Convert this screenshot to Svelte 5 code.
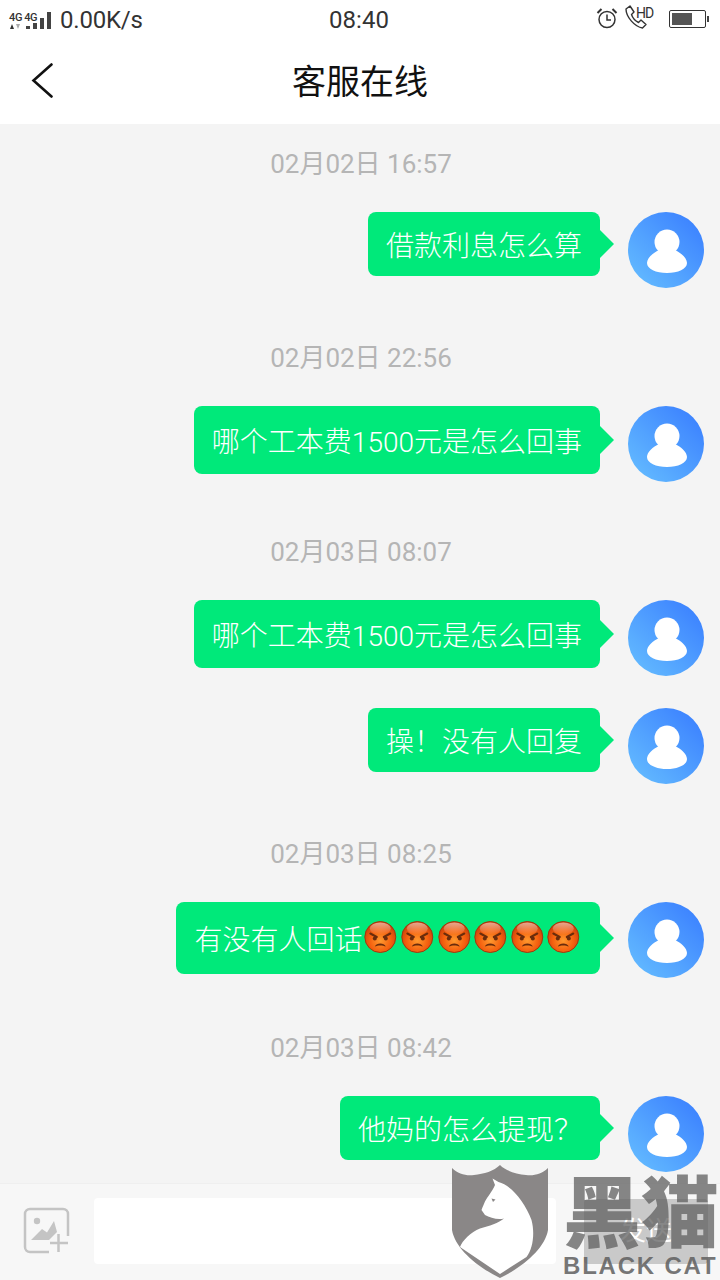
<script>
  const groups = [
    { time: "02月02日 16:57", msgs: [{ text: "借款利息怎么算" }] },
    { time: "02月02日 22:56", msgs: [{ text: "哪个工本费1500元是怎么回事", tall: true }] },
    {
      time: "02月03日 08:07",
      msgs: [{ text: "哪个工本费1500元是怎么回事", tall: true }, { text: "操！没有人回复" }],
    },
    { time: "02月03日 08:25", msgs: [{ text: "有没有人回话", angry: 6 }] },
    { time: "02月03日 08:42", msgs: [{ text: "他妈的怎么提现？" }] },
  ];
</script>

<div class="page">
  <div class="status">
    <div class="status-left">
      <div class="net">
        <div class="net-top"><span>4G</span><span>4G</span></div>
        <div class="net-arrows"><i class="up"></i><i class="down"></i></div>
      </div>
      <div class="signal"><i class="s1"></i><i class="s2"></i><i class="s3"></i><i class="s4"></i></div>
      <span class="speed">0.00K/s</span>
    </div>
    <div class="clock">08:40</div>
    <div class="status-right">
      <svg class="alarm" width="22" height="22" viewBox="0 0 22 22" fill="none" stroke="#333" stroke-width="1.5">
        <circle cx="11" cy="12.5" r="8" />
        <path d="M11 7.5v5.5h4" />
        <path d="M1.5 6 5.5 2M20.5 6l-4-4" stroke-width="2" />
      </svg>
      <div class="call">
        <svg width="24" height="26" viewBox="0 0 24 26" fill="none" stroke="#333" stroke-width="1.4" stroke-linejoin="round">
          <path d="M2 5 6 2l4 6-2.5 2.500c1 3 4 6.500 7 8l2.500-2.500 5 4.500-3.500 3.500C11 23 2 13 2 5Z" />
        </svg>
        <span>HD</span>
      </div>
      <div class="battery"><div class="battery-fill"></div></div>
      <div class="battery-tip"></div>
    </div>
  </div>

  <header class="nav">
    <svg class="back" width="24" height="36" viewBox="0 0 24 36" fill="none" stroke="#111" stroke-width="2.600" stroke-linecap="round">
      <path d="M20.500 1.500 2.500 17.500l18 16" />
    </svg>
    <h1>客服在线</h1>
  </header>

  <main class="chat">
    {#each groups as group}
      <section class="group">
        <div class="time">{group.time}</div>
        <div class="msgs">
          {#each group.msgs as msg}
            <div class="msg">
              <div class="bubble" class:tall={msg.tall} class:angry={msg.angry}>
                <span>{msg.text}</span>
                {#each Array(msg.angry || 0) as _}
                  <svg class="emoji" width="36.600" height="36" viewBox="0 0 36 36">
                    <defs>
                      <radialGradient id="face" cx="50%" cy="62%" r="58%">
                        <stop offset="0" stop-color="#ff9a2e" />
                        <stop offset="0.6" stop-color="#f4600f" />
                        <stop offset="1" stop-color="#c9400a" />
                      </radialGradient>
                      <linearGradient id="shine" x1="0" y1="0" x2="0" y2="1">
                        <stop offset="0" stop-color="#fff" stop-opacity="0.55" />
                        <stop offset="1" stop-color="#fff" stop-opacity="0" />
                      </linearGradient>
                    </defs>
                    <circle cx="18" cy="17" r="15.500" fill="url(#face)" stroke="#9c3a10" stroke-width="1" />
                    <ellipse cx="18" cy="8.500" rx="10.500" ry="6" fill="url(#shine)" />
                    <path d="M8 13.500 14.500 17M28 13.500 21.500 17" stroke="#6b2c0c" stroke-width="2" stroke-linecap="round" />
                    <circle cx="12.500" cy="18.500" r="2" fill="#6b2c0c" />
                    <circle cx="23.500" cy="18.500" r="2" fill="#6b2c0c" />
                    <path d="M12.500 26.500c1.500-4 9.500-4 11 0-3-1.500-8-1.500-11 0Z" fill="#6b2c0c" />
                  </svg>
                {/each}
              </div>
              <svg class="avatar" width="76" height="76" viewBox="0 0 76 76">
                <defs>
                  <linearGradient id="avatar-bg" x1="0" y1="1" x2="1" y2="0">
                    <stop offset="0.1" stop-color="#62b9ff" />
                    <stop offset="0.9" stop-color="#3c82ff" />
                  </linearGradient>
                </defs>
                <circle cx="38" cy="38" r="38" fill="url(#avatar-bg)" />
                <circle cx="39" cy="30" r="12.500" fill="#fff" />
                <path d="M31 38Q36 42 39 42T47 38C53 41 59 46 59 51C59 57 50 61 39 61S19 57 19 51C19 46 25 41 31 38Z" fill="#fff" />
              </svg>
            </div>
          {/each}
        </div>
      </section>
    {/each}
  </main>

  <footer class="bar">
    <svg class="add" width="48" height="48" viewBox="0 0 48 48" fill="none">
      <path d="M26 45H7a5 5 0 0 1-5-5V7a5 5 0 0 1 5-5h33a5 5 0 0 1 5 5v22" stroke="#c4c4c4" stroke-width="2.500" />
      <circle cx="14" cy="14" r="3.200" fill="#c4c4c4" />
      <path d="M8 33 19 22l5 3.500 7-11.500 3 11-8 8Z" fill="#c4c4c4" />
      <path d="M27 36h18M35.500 27v18" stroke="#c4c4c4" stroke-width="2.500" />
    </svg>
    <div class="input"></div>
    <div class="send">发送</div>
  </footer>

  <div class="mark">
    <svg width="98" height="116" viewBox="0 0 98 116">
      <path d="M1 3C7 9 15 11 23 10 33 9 43 6 49 0 55 6 65 9 75 10 83 11 91 9 97 3V65C94 84 70 103 49 113 28 103 4 84 1 65Z" fill="#8a8787" />
      <path d="M41.500 13.500 47.500 17C60 20 74 37 80.500 55 84 68 82 84 75.500 92L49 109 9 82C11 76 20 67 29 63.500 38 61 48 58 53 53.500 47 55 39 53 34 50L30.500 45C32 41 33 39 34 36.500 37 31 41 27 44 20Z" fill="#fff" />
      <path d="M40.500 33.500 44.500 34.500 42 37Z" fill="#8a8787" />
    </svg>
    <div class="mark-text">
      <div class="mark-cn">黑猫</div>
      <div class="mark-en">BLACK CAT</div>
    </div>
  </div>
</div>

<style>
  :global(body) {
    margin: 0;
    background: #f4f4f4;
  }

  :global(*) {
    box-sizing: border-box;
  }

  .page {
    position: relative;
    width: 720px;
    height: 1280px;
    overflow: hidden;
    background: #f4f4f4;
    font-family: Roboto, "Noto Sans CJK SC", sans-serif;
  }

  .status {
    display: grid;
    grid-template-columns: 1fr auto 1fr;
    align-items: center;
    height: 40px;
    padding: 0 11px 0 9px;
    background: #fff;
    color: #333;
  }

  .status-left {
    display: flex;
    align-items: center;
  }

  .net {
    display: flex;
    flex-direction: column;
    width: 30px;
  }

  .net-top {
    display: flex;
    gap: 2px;
  }

  .net-top span {
    font-size: 11px;
    font-weight: 500;
    letter-spacing: -0.3px;
    line-height: 11px;
  }

  .net-arrows {
    display: flex;
    gap: 2px;
    margin: 1px 0 0 1px;
  }

  .net-arrows i {
    width: 0;
    height: 0;
    border-left: 2.500px solid transparent;
    border-right: 2.500px solid transparent;
  }

  .net-arrows .up {
    border-bottom: 5px solid #333;
  }

  .net-arrows .down {
    border-top: 5px solid #aaa;
  }

  .signal {
    display: flex;
    align-items: flex-end;
    gap: 3px;
    height: 18px;
    margin-left: -13px;
  }

  .signal i {
    display: block;
    width: 4px;
    background: #444;
  }

  .s1 {
    height: 3px;
  }

  .s2 {
    height: 6px;
  }

  .s3 {
    height: 11px;
  }

  .s4 {
    height: 17px;
  }

  .speed {
    margin-left: 9px;
    font-size: 24px;
    letter-spacing: -0.2px;
    line-height: 32px;
  }

  .clock {
    font-size: 24px;
    line-height: 32px;
  }

  .status-right {
    display: flex;
    align-items: center;
    justify-content: flex-end;
    margin-top: -3px;
  }

  .alarm {
    margin-top: -1px;
  }

  .call {
    position: relative;
    width: 29px;
    height: 26px;
    margin: 0 16px 0 6px;
  }

  .call svg {
    display: block;
    margin-top: -2px;
  }

  .call span {
    position: absolute;
    top: -1px;
    left: 12px;
    font-size: 14px;
    letter-spacing: -1px;
    line-height: 16px;
  }

  .battery {
    width: 37px;
    height: 18px;
    padding: 2px;
    border: 1px solid #333;
    border-radius: 2px;
  }

  .battery-fill {
    width: 20px;
    height: 100%;
    background: #555;
  }

  .battery-tip {
    width: 2px;
    height: 6px;
    margin-left: 1px;
    background: #444;
  }

  .nav {
    position: relative;
    display: flex;
    align-items: center;
    justify-content: center;
    height: 84px;
    background: #fff;
  }

  .back {
    position: absolute;
    left: 31px;
    top: 23px;
  }

  h1 {
    margin: 0;
    color: #111;
    font-size: 34px;
    font-weight: 400;
    line-height: 84px;
  }

  .chat {
    display: flex;
    flex-direction: column;
    gap: 44px;
    padding-top: 14px;
  }

  .time {
    margin-bottom: 23px;
    padding-top: 1px;
    padding-left: 2px;
    color: #b5b5b5;
    font-size: 26px;
    line-height: 50px;
    text-align: center;
  }

  .msgs {
    display: flex;
    flex-direction: column;
    gap: 32px;
  }

  .msg {
    display: flex;
    align-items: flex-start;
    justify-content: flex-end;
    padding-right: 16px;
  }

  .bubble {
    position: relative;
    display: flex;
    align-items: center;
    height: 64px;
    margin-right: 28px;
    padding: 0 18px;
    border-radius: 8px;
    background: #00e97a;
    color: #fff;
    font-size: 28px;
    font-weight: 300;
    white-space: nowrap;
  }

  .bubble.tall {
    height: 68px;
  }

  .bubble.angry {
    height: 72px;
  }

  .bubble::after {
    content: "";
    position: absolute;
    top: 50%;
    right: -14px;
    margin-top: -14px;
    border-top: 14px solid transparent;
    border-bottom: 14px solid transparent;
    border-left: 14px solid #00e97a;
  }

  .emoji {
    display: block;
    flex: none;
  }

  .avatar {
    display: block;
    flex: none;
  }

  .bar {
    position: absolute;
    left: 0;
    right: 0;
    bottom: 0;
    display: flex;
    align-items: center;
    height: 97px;
    padding: 0 12px 2px 23px;
    border-top: 1px solid #efefef;
    background: #f7f7f7;
  }

  .add {
    flex: none;
    margin-right: 23px;
  }

  .input {
    flex: none;
    width: 462px;
    height: 66px;
    border-radius: 4px;
    background: #fff;
  }

  .send {
    flex: none;
    width: 124px;
    height: 65px;
    margin-left: 28px;
    border-radius: 4px;
    background: #c9c9c9;
    color: #fff;
    font-size: 26px;
    line-height: 65px;
    text-align: center;
  }

  .mark {
    position: absolute;
    left: 451px;
    top: 1165px;
    display: flex;
    gap: 14px;
    pointer-events: none;
  }

  .mark svg {
    display: block;
    flex: none;
  }

  .mark-text {
    display: flex;
    flex-direction: column;
    align-items: flex-start;
    padding-top: 13px;
  }

  .mark-cn {
    color: rgba(95, 95, 95, 0.75);
    font-size: 78px;
    font-weight: 900;
    line-height: 76px;
    white-space: nowrap;
  }

  .mark-en {
    color: rgba(95, 95, 95, 0.85);
    font-family: "Liberation Sans", sans-serif;
    font-size: 24px;
    font-weight: 700;
    letter-spacing: 1.800px;
    line-height: 24px;
    white-space: nowrap;
  }
</style>
